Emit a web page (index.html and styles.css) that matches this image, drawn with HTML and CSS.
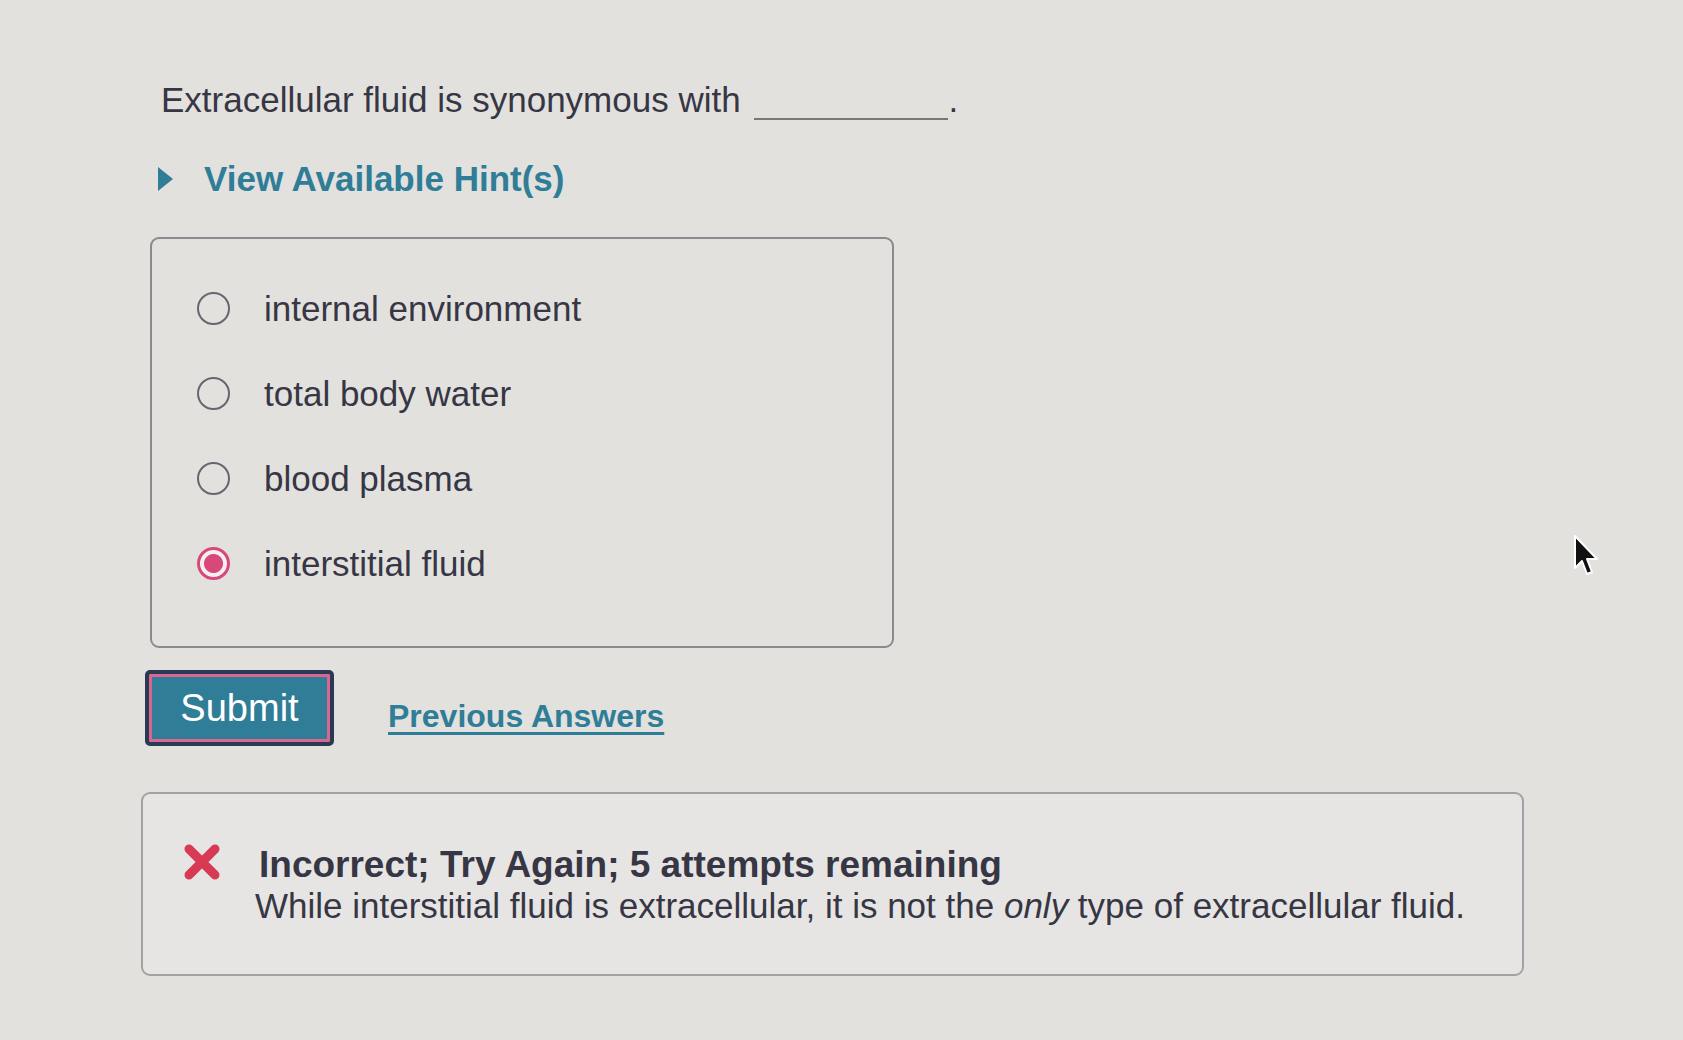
FILE: index.html
```html
<!DOCTYPE html>
<html lang="en">
<head>
    <meta charset="UTF-8">
    <title>Question</title>
    <link rel="stylesheet" href="styles.css">
</head>
<body>
    <div id="page">
        <!-- Pregunta -->
        <div class="question">
            Extracellular fluid is synonymous with <span class="blank"></span>.
        </div>

        <div class="hint-toggle">
            <span class="hint-arrow"></span>
            <span class="hint-text">View Available Hint(s)</span>
        </div>

        <!-- Opciones -->
        <div class="options">
            <label class="option"><span class="radio"></span>internal environment</label>
            <label class="option"><span class="radio"></span>total body water</label>
            <label class="option"><span class="radio"></span>blood plasma</label>
            <label class="option"><span class="radio checked"></span>interstitial fluid</label>
        </div>

        <div class="actions">
            <button class="submit">Submit</button>
            <a class="previous" href="#">Previous Answers</a>
        </div>

        <!-- Resultado -->
        <div class="feedback">
            <svg class="feedback-icon" width="40" height="36" viewBox="0 0 40 36">
                <path d="M7 5 L33 31 M33 5 L7 31" stroke="#d73a52" stroke-width="9" stroke-linecap="round"/>
            </svg>
            <div class="feedback-body">
                <div class="feedback-title">Incorrect; Try Again; 5 attempts remaining</div>
                <div class="feedback-text">While interstitial fluid is extracellular, it is not the <em>only</em> type of extracellular fluid.</div>
            </div>
        </div>
    </div>

    <svg class="cursor" width="28" height="44" viewBox="0 0 28 44">
        <path d="M3 2 L3 34 L10 27 L15 40 L20 38 L15 25 L25 25 Z" fill="#111" stroke="#fff" stroke-width="2" stroke-linejoin="round"/>
    </svg>
</body>
</html>
```

FILE: styles.css
```css
body, html {
    margin: 0;
    padding: 0;
    font-family: "Liberation Sans", Arial, sans-serif;
    background-color: #e2e1de;
    color: #363644;
    height: 100%;
    overflow: hidden;
}

#page {
    padding: 80px 0 0 150px;
    display: flex;
    flex-direction: column;
    align-items: flex-start;
}

.question {
    font-size: 35px;
    line-height: 40px;
    padding-left: 11px;
}

.blank {
    display: inline-block;
    width: 194px;
    border-bottom: 2px solid #777;
    margin-left: 4px;
    vertical-align: -8px;
}

.hint-toggle {
    display: flex;
    align-items: center;
    margin-top: 39px;
    padding-left: 8px;
    height: 40px;
}

.hint-arrow {
    width: 0;
    height: 0;
    border-top: 12px solid transparent;
    border-bottom: 12px solid transparent;
    border-left: 15px solid #2f7d97;
}

.hint-text {
    font-size: 35px;
    font-weight: bold;
    color: #2f7d97;
    margin-left: 31px;
}

.options {
    margin-top: 38px;
    width: 744px;
    box-sizing: border-box;
    border: 2px solid #8a8a8e;
    border-radius: 9px;
    padding: 27px 0 40px 45px;
    display: flex;
    flex-direction: column;
}

.option {
    height: 85px;
    display: flex;
    align-items: center;
    font-size: 35px;
}

.radio {
    width: 33px;
    height: 33px;
    box-sizing: border-box;
    border: 2px solid #666670;
    border-radius: 50%;
    margin-right: 34px;
    flex-shrink: 0;
}

.radio.checked {
    border: 3px solid #d9487a;
    background: radial-gradient(circle, #d9487a 0, #d9487a 9px, #f4f0f0 10px);
}

.actions {
    margin-top: 22px;
    display: flex;
    align-items: center;
    margin-left: -5px;
}

.submit {
    width: 189px;
    height: 76px;
    box-sizing: border-box;
    background-color: #2f7d97;
    border: 4px solid #2a3a55;
    border-radius: 5px;
    box-shadow: inset 0 0 0 3px #d8668f;
    color: #fff;
    font-family: "Liberation Sans", Arial, sans-serif;
    font-size: 38px;
    cursor: pointer;
}

.previous {
    margin-left: 54px;
    margin-top: 16px;
    font-size: 32px;
    font-weight: bold;
    color: #2f7d97;
    text-decoration: underline;
    text-underline-offset: 5px;
    text-decoration-thickness: 3px;
}

.feedback {
    margin-top: 46px;
    margin-left: -9px;
    width: 1383px;
    box-sizing: border-box;
    border: 2px solid #a2a2a4;
    border-radius: 9px;
    background-color: #e6e5e3;
    padding: 50px 0 48px 39px;
    display: flex;
    align-items: flex-start;
}

.feedback-icon {
    flex-shrink: 0;
}

.feedback-body {
    margin-left: 37px;
}

.feedback-title {
    font-size: 37px;
    line-height: 42px;
    font-weight: bold;
}

.feedback-text {
    font-size: 35px;
    line-height: 40px;
    margin-left: -4px;
}

.cursor {
    position: absolute;
    left: 1572px;
    top: 534px;
}
```
